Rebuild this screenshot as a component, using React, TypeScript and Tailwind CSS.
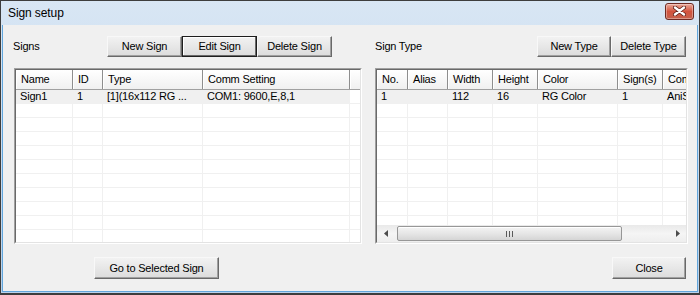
import React from 'react';

type Col = { label: string; w: number };

const signCols: Col[] = [
  { label: 'Name', w: 57 },
  { label: 'ID', w: 30 },
  { label: 'Type', w: 100 },
  { label: 'Comm Setting', w: 147 },
];
const signRow = ['Sign1', '1', '[1](16x112 RG ...', 'COM1: 9600,E,8,1'];

const typeCols: Col[] = [
  { label: 'No.', w: 31 },
  { label: 'Alias', w: 40 },
  { label: 'Width', w: 45 },
  { label: 'Height', w: 45 },
  { label: 'Color', w: 80 },
  { label: 'Sign(s)', w: 45 },
  { label: 'Comm Setting', w: 90 },
];
const typeRow = ['1', '', '112', '16', 'RG Color', '1', 'AniSign Protocol'];

const Button: React.FC<{ label: string; w: number; h?: number; isDefault?: boolean }> = ({
  label,
  w,
  h = 21,
  isDefault,
}) => (
  <button
    style={{ width: w, height: h }}
    className={
      isDefault
        ? 'flex items-center justify-center border border-[#1e1e1e] bg-gradient-to-b from-[#f2f2f2] to-[#dcdcdc] shadow-[inset_-1px_-1px_0_#696969,inset_1px_1px_0_#fff] text-black'
        : 'flex items-center justify-center border border-t-[#f8f8f8] border-l-[#f8f8f8] border-r-[#696969] border-b-[#696969] bg-gradient-to-b from-[#f2f2f2] to-[#dcdcdc] shadow-[inset_-1px_-1px_0_#a0a0a0] text-black'
    }
  >
    {label}
  </button>
);

const HeaderCell: React.FC<{ w: number; label?: string }> = ({ w, label }) => (
  <div
    style={{ width: w }}
    className="shrink-0 h-full flex items-center px-[5px] border-r border-r-[#8e8e8e] shadow-[inset_1px_0_0_#fff] bg-gradient-to-b from-white to-[#f0f0f0] whitespace-nowrap overflow-hidden"
  >
    {label}
  </div>
);

const ListView: React.FC<{
  cols: Col[];
  row: string[];
  filler?: number;
  rows: number;
  children?: React.ReactNode;
}> = ({ cols, row, filler, rows, children }) => (
  <div className="h-[176px] border border-t-[#a0a0a0] border-l-[#a0a0a0] border-r-white border-b-white">
    <div className="h-full flex flex-col border border-t-[#696969] border-l-[#696969] border-r-[#e3e3e3] border-b-[#e3e3e3] bg-white overflow-hidden">
      <div className="h-[20px] shrink-0 flex border-b border-b-[#a0a0a0]">
        {cols.map((c) => (
          <HeaderCell key={c.label} w={c.w} label={c.label} />
        ))}
        {filler ? <HeaderCell w={filler} /> : null}
      </div>
      <div className="flex-1 overflow-hidden">
        {Array.from({ length: rows }).map((_, i) => (
          <div key={i} className="h-[14px] flex">
            {cols.map((c, j) => (
              <div
                key={c.label}
                style={{ width: c.w }}
                className={`shrink-0 h-full border-r border-b border-[#f0f0f0] px-[4px] flex items-center whitespace-nowrap overflow-hidden ${
                  i === 0 ? 'bg-[#f0f0f0]' : ''
                }`}
              >
                {i === 0 ? row[j] : ''}
              </div>
            ))}
            {filler ? <div style={{ width: filler }} className="shrink-0 h-full border-b border-[#f0f0f0]" /> : null}
          </div>
        ))}
      </div>
      {children}
    </div>
  </div>
);

const HScroll = () => (
  <div className="h-[17px] shrink-0 flex bg-gradient-to-b from-[#e9e9e9] via-[#f5f5f5] to-[#eeeeee]">
    <div className="w-[17px] h-full flex items-center justify-center">
      <svg width="4" height="7" viewBox="0 0 4 7">
        <path d="M4 0 L0 3.5 L4 7 Z" fill="#4d4d4d" />
      </svg>
    </div>
    <div className="ml-[3px] mt-[1px] w-[225px] h-[15px] rounded-[2px] border border-[#979797] bg-gradient-to-b from-[#f4f4f4] via-[#e6e6e6] to-[#d5d5d5] shadow-[inset_0_1px_0_#fff] flex items-center justify-center">
      <svg width="7" height="6" viewBox="0 0 7 6">
        <path d="M0.5 0 V6 M3.5 0 V6 M6.5 0 V6" stroke="#5a5a5a" strokeWidth="1" />
      </svg>
    </div>
    <div className="ml-auto w-[17px] h-full flex items-center justify-center">
      <svg width="4" height="7" viewBox="0 0 4 7">
        <path d="M0 0 L4 3.5 L0 7 Z" fill="#4d4d4d" />
      </svg>
    </div>
  </div>
);

export default function App() {
  return (
    <div className="w-[700px] h-[295px] flex flex-col border border-[#3d3d3d] border-b-2 bg-gradient-to-b from-[#d8e6f4] to-[#b9d1ea] font-['Liberation_Sans',Arial,sans-serif] text-[11px] tracking-[-0.2px] text-black select-none">
      <div className="h-[24px] shrink-0 flex items-center pl-[7px] pr-[5px]">
        <span className="text-[12px] tracking-[-0.1px] text-black">Sign setup</span>
        <div className="ml-auto mt-[-4px] w-[29px] h-[17px] rounded-[3px] border border-[#6e2a22] bg-gradient-to-b from-[#e9a99b] via-[#d2533d] to-[#c4614c] shadow-[inset_0_0_0_1px_rgba(255,255,255,0.35)] flex items-center justify-center">
          <svg width="13" height="10" viewBox="0 0 13 10">
            <path d="M2 1.5 L11 8.5 M11 1.5 L2 8.5" stroke="#5b2019" strokeWidth="4" strokeLinecap="round" />
            <path d="M2 1.5 L11 8.5 M11 1.5 L2 8.5" stroke="#fff" strokeWidth="2.4" strokeLinecap="round" />
          </svg>
        </div>
      </div>
      <div className="flex-1 mx-[1px] mb-[1px] border border-t-0 border-[#62a6dc] bg-[#f0f0f0] pl-[11px] pr-[9px] pt-[11px] flex gap-[13px]">
        <div className="w-[348px] flex flex-col">
          <div className="h-[21px] flex items-center">
            <span className="w-[94px] -ml-[1px]">Signs</span>
            <Button label="New Sign" w={75} />
            <Button label="Edit Sign" w={75} isDefault />
            <Button label="Delete Sign" w={75} />
          </div>
          <div className="mt-[11px]">
            <ListView cols={signCols} row={signRow} filler={10} rows={11} />
          </div>
          <div className="mt-[13px] pl-[80px]">
            <Button label="Go to Selected Sign" w={125} h={22} />
          </div>
        </div>
        <div className="w-[313px] flex flex-col">
          <div className="h-[21px] flex items-center pr-[2px]">
            <span>Sign Type</span>
            <div className="ml-auto flex">
              <Button label="New Type" w={74} />
              <Button label="Delete Type" w={75} />
            </div>
          </div>
          <div className="mt-[11px]">
            <ListView cols={typeCols} row={typeRow} rows={10}>
              <HScroll />
            </ListView>
          </div>
          <div className="mt-[13px] flex justify-end pr-[2px]">
            <Button label="Close" w={74} h={22} />
          </div>
        </div>
      </div>
    </div>
  );
}
